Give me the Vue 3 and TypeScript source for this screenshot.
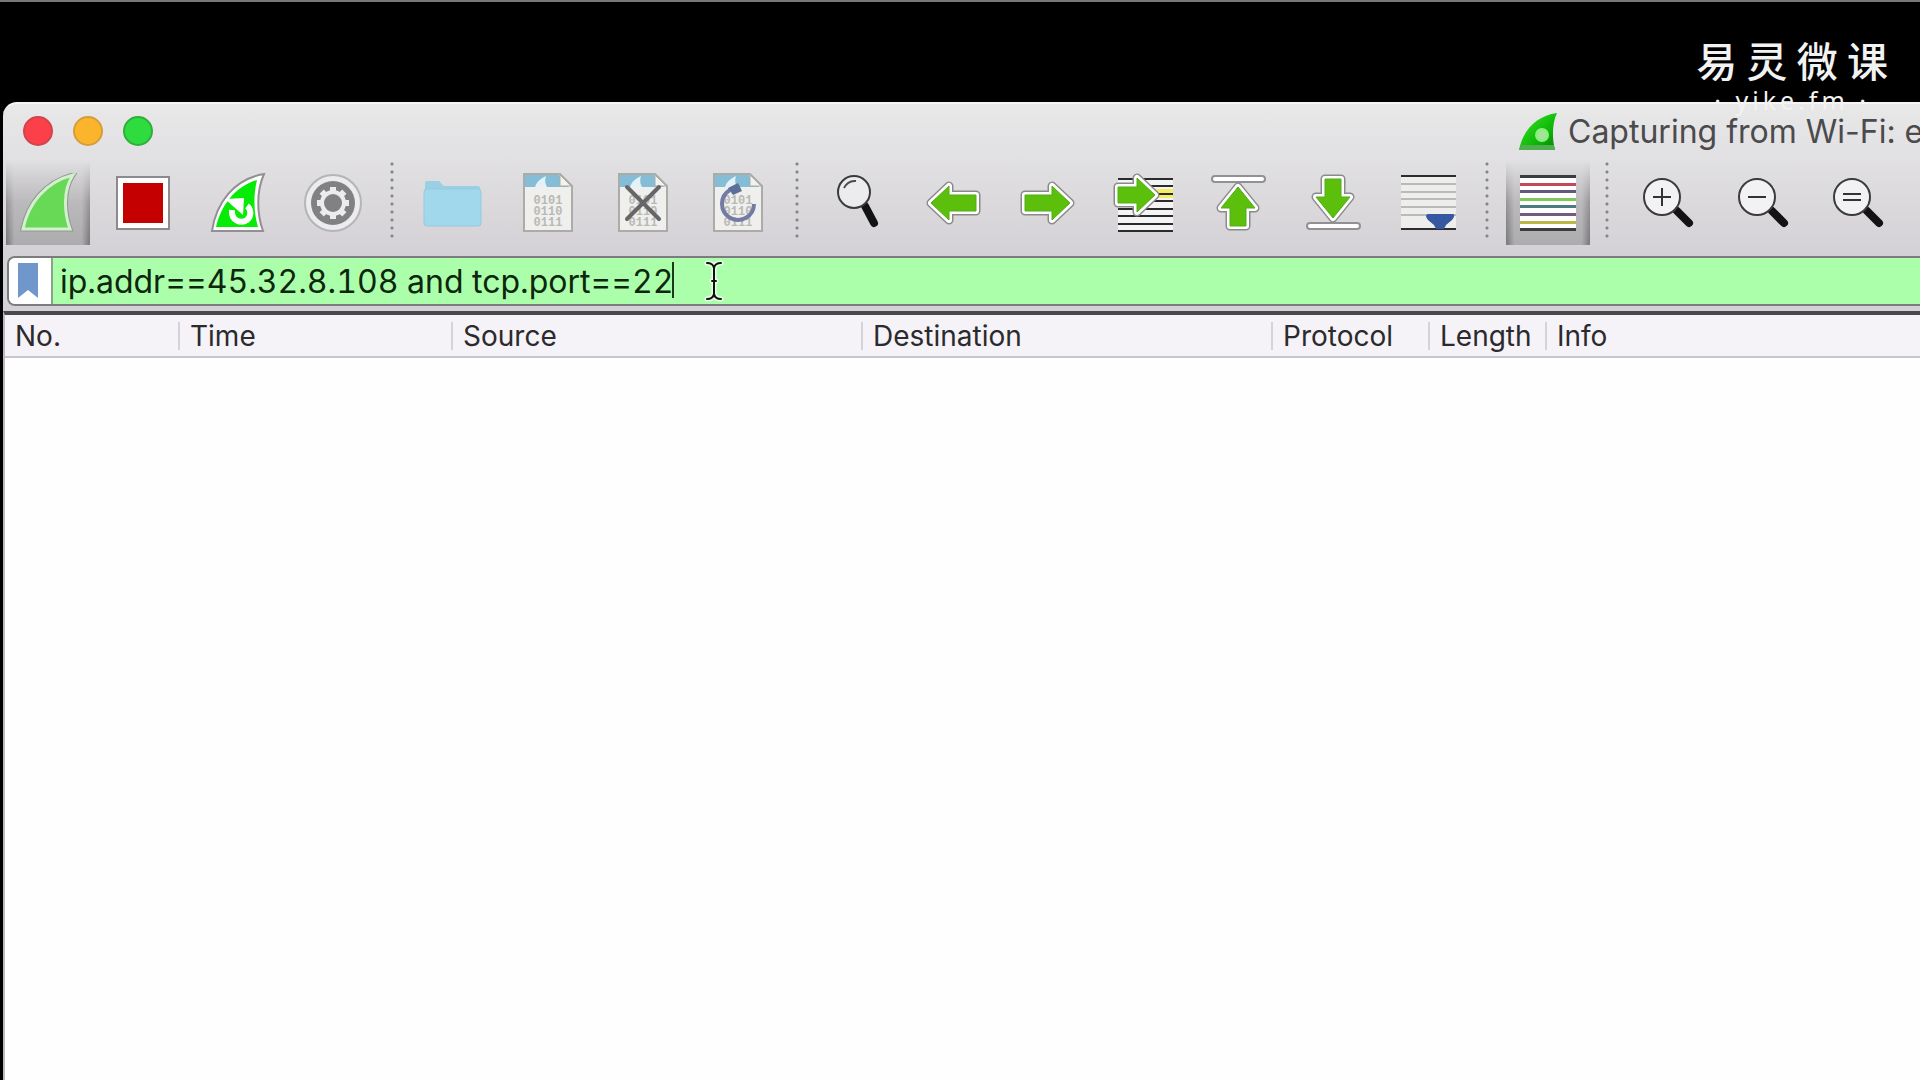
<script setup lang="ts">
import { ref } from 'vue'

type Tool = { id: string; label: string; pressed?: boolean; disabled?: boolean }

const groups: Tool[][] = [
  [
    { id: 'start', label: 'Start capturing packets', pressed: true },
    { id: 'stop', label: 'Stop capturing packets' },
    { id: 'restart', label: 'Restart current capture' },
    { id: 'options', label: 'Capture options' },
  ],
  [
    { id: 'open', label: 'Open a capture file', disabled: true },
    { id: 'save', label: 'Save this capture file', disabled: true },
    { id: 'close', label: 'Close this capture file', disabled: true },
    { id: 'reload', label: 'Reload this file', disabled: true },
  ],
  [
    { id: 'find', label: 'Find a packet' },
    { id: 'back', label: 'Go back in packet history' },
    { id: 'forward', label: 'Go forward in packet history' },
    { id: 'goto', label: 'Go to specified packet' },
    { id: 'first', label: 'Go to the first packet' },
    { id: 'last', label: 'Go to the last packet' },
    { id: 'autoscroll', label: 'Automatically scroll to the last packet' },
  ],
  [{ id: 'colorize', label: 'Colorize packet list', pressed: true }],
  [
    { id: 'zoomin', label: 'Zoom in' },
    { id: 'zoomout', label: 'Zoom out' },
    { id: 'zoomreset', label: 'Normal size' },
  ],
]

const arrows: Record<string, string> = {
  back: 'M8 30 L26 13 V22 H53 V38 H26 V47 Z',
  forward: 'M52 30 L34 13 V22 H7 V38 H34 V47 Z',
  goto: 'M42 22 L24 5 V14 H5 V30 H24 V39 Z',
  first: 'M30 14 L47 35 H38 V53 H22 V35 H13 Z',
  last: 'M30 45 L47 24 H38 V6 H22 V24 H13 Z',
}

const stripes = ['#3c3b40', '#c4485c', '#62597c', '#7fc95c', '#4d7a80', '#745a7c', '#bdb545', '#3c3b40']
const greyLines = [10, 18, 25, 33, 41]
const gotoLines = [6, 13, 21, 28, 36, 43, 51, 58]
const teeth = [0, 45, 90, 135, 180, 225, 270, 315]
const bits = [
  { y: 31, text: '0101' },
  { y: 42, text: '0110' },
  { y: 53, text: '0111' },
]

const columns = [
  { name: 'No.', cls: 'c-no' },
  { name: 'Time', cls: 'c-time' },
  { name: 'Source', cls: 'c-addr' },
  { name: 'Destination', cls: 'c-addr' },
  { name: 'Protocol', cls: 'c-proto' },
  { name: 'Length', cls: 'c-len' },
  { name: 'Info', cls: 'c-info' },
]

const filter = ref('ip.addr==45.32.8.108 and tcp.port==22')
</script>

<template>
  <div class="desktop">
    <main class="window">
      <header class="titlebar">
        <div class="lights">
          <button class="light red" aria-label="Close"></button>
          <button class="light yellow" aria-label="Minimize"></button>
          <button class="light green" aria-label="Zoom"></button>
        </div>
        <div class="title">
          <svg class="app-icon" viewBox="0 0 40 38" aria-hidden="true">
            <defs>
              <linearGradient id="fin" x1="0" y1="0" x2="1" y2="1">
                <stop offset="0" stop-color="#3bea2c" />
                <stop offset="0.6" stop-color="#0fb808" />
                <stop offset="1" stop-color="#0a7d0c" />
              </linearGradient>
            </defs>
            <path d="M1 37 C5 17 18 3 39 0 C34 10 34 26 37 37 Z" fill="url(#fin)" />
            <path d="M1 37 L3 32 H36 L37 37 Z" fill="#4fae4e" />
            <circle cx="24" cy="22" r="7" fill="#8af07c" />
            <circle cx="24" cy="22" r="4" fill="#a5e2a0" />
          </svg>
          <span>Capturing from Wi-Fi: e</span>
        </div>
      </header>

      <nav class="toolbar" aria-label="Main toolbar">
        <template v-for="(group, g) in groups" :key="g">
          <span v-if="g > 0" class="separator"></span>
          <button
            v-for="tool in group"
            :key="tool.id"
            class="tool"
            :class="{ pressed: tool.pressed }"
            :aria-label="tool.label"
            :disabled="tool.disabled"
          >
            <svg class="icon" viewBox="0 0 60 60" aria-hidden="true">
              <template v-if="tool.id === 'start'">
                <path d="M5 56 C10 31 27 9 55 2 C45 17 46 39 52 56 Z" fill="none" stroke="#8f9a8f" stroke-width="5" />
                <path d="M5 56 C10 31 27 9 55 2 C45 17 46 39 52 56 Z" fill="#67d957" stroke="#d3efcf" stroke-width="3" />
              </template>

              <template v-else-if="tool.id === 'stop'">
                <rect x="4" y="4" width="52" height="52" fill="#fff" stroke="#8c8a8c" stroke-width="2" />
                <rect x="10" y="10" width="40" height="40" fill="#c40000" />
              </template>

              <template v-else-if="tool.id === 'restart'">
                <path d="M4 58 C8 30 26 6 56 1 C48 19 49 41 55 58 Z" fill="#fff" stroke="#929092" stroke-width="2" />
                <path d="M8 54 C13 32 28 13 49 7 C45 23 46 41 50 54 Z" fill="#06ec06" />
                <path d="M24 37 C23 48 33 51 39 47 C44 43 43 36 39 33" fill="none" stroke="#fff" stroke-width="6" />
                <path d="M17 26 L36 25 L35 42 Z" fill="#fff" />
              </template>

              <template v-else-if="tool.id === 'options'">
                <circle cx="30" cy="30" r="28" fill="#ecebed" stroke="#b5b4b6" stroke-width="2" />
                <circle cx="30" cy="30" r="22" fill="#818183" />
                <circle cx="30" cy="30" r="13" fill="#ececee" />
                <rect
                  v-for="a in teeth"
                  :key="a"
                  x="27"
                  y="14"
                  width="6"
                  height="8"
                  fill="#ececee"
                  :transform="`rotate(${a} 30 30)`"
                />
                <circle cx="30" cy="30" r="9" fill="#818183" />
              </template>

              <template v-else-if="tool.id === 'open'">
                <path d="M2 10 Q2 8 4 8 H16 L21 13 H55 Q57 13 57 15 V19 H2 Z" fill="#9bcfe4" />
                <rect x="1" y="16" width="57" height="37" rx="3" fill="#a2d8ec" stroke="#94cadf" />
              </template>

              <template v-else-if="tool.id === 'save' || tool.id === 'close' || tool.id === 'reload'">
                <path d="M6 1 H42 L54 13 V58 H6 Z" fill="#efefed" stroke="#abaca8" stroke-width="2" />
                <path d="M7 2 H41 L51 14 H7 Z" fill="#85bdd6" />
                <path d="M17 14 Q19 7 28 3 Q26 9 29 14 Z" fill="#e4f1f8" />
                <path d="M42 2 L53 13 H42 Z" fill="#f3f3ee" stroke="#abaca8" />
                <text v-for="b in bits" :key="b.y" x="30" :y="b.y" class="bits">{{ b.text }}</text>
                <path
                  v-if="tool.id === 'close'"
                  d="M14 14 L46 46 M46 14 L14 46"
                  stroke="#666668"
                  stroke-width="4"
                  stroke-linecap="round"
                />
                <template v-if="tool.id === 'reload'">
                  <path d="M22 17 A16 16 0 1 0 46 31" fill="none" stroke="#737ba3" stroke-width="4" />
                  <path d="M20 15 L30 10 L34 18 L25 22 Z" fill="#5c6f99" />
                </template>
              </template>

              <template v-else-if="tool.id === 'find'">
                <path d="M37 33 L46 50" stroke="#131313" stroke-width="8" stroke-linecap="round" />
                <circle cx="26" cy="19" r="16" fill="#ececee" stroke="#3b3b3d" stroke-width="2" />
                <path d="M16 15 Q20 7 28 8" fill="none" stroke="#4c4c4e" stroke-width="2" />
              </template>

              <template v-else-if="tool.id.startsWith('zoom')">
                <path d="M39 38 L51 50" stroke="#131313" stroke-width="8" stroke-linecap="round" />
                <circle cx="24" cy="24" r="18" fill="#f2f2f4" stroke="#3b3b3d" stroke-width="2" />
                <path v-if="tool.id === 'zoomin'" d="M15 24 H33 M24 15 V33" stroke="#333" stroke-width="2" />
                <path v-if="tool.id === 'zoomout'" d="M15 24 H33" stroke="#333" stroke-width="2" />
                <path v-if="tool.id === 'zoomreset'" d="M15 21 H33 M15 27 H33" stroke="#333" stroke-width="2" />
              </template>

              <template v-else-if="tool.id === 'autoscroll'">
                <rect x="3" y="3" width="55" height="54" fill="#eeeeec" />
                <path v-for="y in greyLines" :key="y" :d="`M3 ${y + 1} H58`" stroke="#bbbab9" stroke-width="2" />
                <path d="M3 3 H58 M3 56 H58" stroke="#2d2d2f" stroke-width="2" />
                <path d="M30 41 H55 Q58 42 54 47 L48 52 L46 56 H38 L36 52 L30 47 Q26 42 30 41 Z" fill="#3558a0" />
              </template>

              <template v-else-if="tool.id === 'colorize'">
                <rect x="2" y="3" width="56" height="55" fill="#fff" />
                <rect
                  v-for="(c, i) in stripes"
                  :key="i"
                  x="2"
                  :y="2 + Math.round(i * 7.6)"
                  width="56"
                  height="3"
                  :fill="c"
                />
              </template>

              <template v-else>
                <template v-if="tool.id === 'goto'">
                  <rect x="5" y="6" width="55" height="52" fill="#f4f4f4" />
                  <rect x="38" y="16" width="22" height="9" fill="#f3ee62" />
                  <path v-for="y in gotoLines" :key="y" :d="`M5 ${y} H60`" stroke="#2b2b2d" stroke-width="2" />
                </template>
                <rect v-if="tool.id === 'first'" x="4" y="3" width="53" height="6" rx="3" fill="#fff" stroke="#919193" stroke-width="2" />
                <rect v-if="tool.id === 'last'" x="4" y="50" width="53" height="6" rx="3" fill="#fff" stroke="#919193" stroke-width="2" />
                <g stroke-linejoin="round">
                  <path :d="arrows[tool.id]" fill="none" stroke="#8a8a8c" stroke-width="9" />
                  <path :d="arrows[tool.id]" fill="#5bbf0c" stroke="#fff" stroke-width="6" />
                  <path :d="arrows[tool.id]" fill="#5bbf0c" stroke="#55ad16" stroke-width="1" />
                </g>
              </template>
            </svg>
          </button>
        </template>
      </nav>

      <form class="filterbar" @submit.prevent>
        <button class="bookmark" type="button" aria-label="Manage saved bookmarks">
          <svg viewBox="0 0 20 36" aria-hidden="true">
            <path d="M0 0 H20 V35 L10 27 L0 35 Z" fill="#6f97cb" />
          </svg>
        </button>
        <div class="field">
          <input v-model="filter" type="text" aria-label="Display filter" spellcheck="false" />
          <span class="caret"></span>
          <svg class="ibeam" viewBox="0 0 20 42" aria-hidden="true">
            <g fill="none" stroke-linecap="round">
              <path d="M3 3 Q9 3 10 8 Q11 3 17 3 M10 8 V34 M3 39 Q9 39 10 34 Q11 39 17 39 M8 21 H12" stroke="#e9ffe8" stroke-width="5" />
              <path d="M3 3 Q9 3 10 8 Q11 3 17 3 M10 8 V34 M3 39 Q9 39 10 34 Q11 39 17 39 M8 21 H12" stroke="#111" stroke-width="2" />
            </g>
          </svg>
        </div>
      </form>

      <section class="packets">
        <table>
          <thead>
            <tr>
              <th v-for="c in columns" :key="c.name" :class="c.cls" scope="col"><span>{{ c.name }}</span></th>
            </tr>
          </thead>
        </table>
      </section>
    </main>

    <aside class="watermark">
      <p class="brand">易 灵 微 课</p>
      <p class="site">· yike.fm ·</p>
    </aside>
  </div>
</template>

<style>
body {
  margin: 0;
  background: #000;
}
</style>

<style scoped>
* {
  box-sizing: border-box;
}

.desktop {
  position: relative;
  display: flex;
  flex-direction: column;
  min-height: 100vh;
  padding: 100px 0 0 3px;
  border-top: 2px solid #777;
  background: #000;
  overflow: hidden;
  font-family: Inter, 'Liberation Sans', sans-serif;
}

.window {
  flex: 1;
  display: flex;
  flex-direction: column;
  border-radius: 14px 0 0 0;
  border-top: 2px solid #f6f5f6;
  background: linear-gradient(#e9e8e9, #d3d1d5 152px);
  overflow: hidden;
}

.titlebar {
  display: flex;
  align-items: center;
  height: 54px;
}

.lights {
  display: flex;
  gap: 20px;
  padding-left: 20px;
}

.light {
  width: 30px;
  height: 30px;
  padding: 0;
  border-radius: 50%;
}

.red {
  background: #fb4049;
  border: 2px solid #d0444b;
}

.yellow {
  background: #fbb52c;
  border: 2px solid #d59d3b;
}

.green {
  background: #2fdc40;
  border: 2px solid #2fae3c;
}

.title {
  display: flex;
  align-items: center;
  gap: 10px;
  width: 402px;
  margin-left: auto;
  padding-top: 2px;
  color: #4b4a4c;
  font-size: 32px;
  line-height: 36px;
  white-space: nowrap;
}

.app-icon {
  flex: none;
  width: 40px;
  height: 38px;
}

.toolbar {
  display: flex;
  gap: 11px;
  padding: 3px 0 0 3px;
}

.tool {
  position: relative;
  flex: none;
  display: flex;
  align-items: center;
  justify-content: center;
  width: 84px;
  height: 84px;
  padding: 0;
  border: 0;
  background: none;
}

.pressed::before {
  content: '';
  position: absolute;
  inset: 0;
  background:
    linear-gradient(90deg, #777578, transparent 10%, transparent 90%, #777578),
    #acabad;
  mask-image: linear-gradient(transparent, #000000b0 50%, #000);
}

.icon {
  position: relative;
  width: 60px;
  height: 60px;
}

.bits {
  fill: #b9b9b4;
  font-family: 'Liberation Mono', monospace;
  font-size: 12px;
  font-weight: bold;
  text-anchor: middle;
}

.separator {
  flex: none;
  width: 14px;
  height: 80px;
  background: radial-gradient(circle at 6px 3px, #858487 1px, transparent 2px) 0 0 / 14px 8px repeat-y;
}

.filterbar {
  display: flex;
  height: 50px;
  margin: 11px 0 5px 4px;
  border: 2px solid #7c7b7e;
  border-right: 0;
  border-radius: 8px 0 0 8px;
  background: #abffaa;
  overflow: hidden;
}

.bookmark {
  display: flex;
  align-items: center;
  justify-content: center;
  width: 44px;
  padding: 0 4px 0 0;
  border: 0;
  border-right: 2px solid #8aa58b;
  background: #fff;
}

.bookmark svg {
  width: 20px;
  height: 36px;
}

.field {
  position: relative;
  flex: 1;
}

.field input {
  display: block;
  width: 100%;
  height: 46px;
  padding: 0 7px;
  border: 0;
  outline: 0;
  background: transparent;
  color: #0e260e;
  font-family: inherit;
  font-size: 32px;
  font-variant-numeric: tabular-nums;
}

.caret {
  position: absolute;
  top: 4px;
  left: 619px;
  width: 2px;
  height: 36px;
  background: #1b3a1b;
}

.ibeam {
  position: absolute;
  top: 2px;
  left: 651px;
  width: 20px;
  height: 42px;
}

.packets {
  flex: 1;
  border-top: 4px solid #4b484d;
  border-left: 2px solid #bdb8bf;
  background: #fffeff;
}

table {
  width: 100%;
  table-layout: fixed;
  border-collapse: collapse;
}

thead {
  background: #f5f3f7;
}

th {
  height: 42px;
  padding: 0;
  border-bottom: 2px solid #c9c6cb;
  color: #2b2a2d;
  font-size: 28px;
  font-weight: 400;
  line-height: 28px;
  text-align: left;
}

th span {
  display: block;
  padding-left: 10px;
  border-left: 2px solid #d6d3d8;
}

.c-no span {
  padding-left: 8px;
  border-left-color: transparent;
}

.c-no {
  width: 173px;
}

.c-time {
  width: 273px;
}

.c-addr {
  width: 410px;
}

.c-proto {
  width: 157px;
}

.c-len {
  width: 117px;
}

.watermark {
  position: absolute;
  top: 32px;
  right: 32px;
  color: #f2f2f2;
  text-align: center;
}

.watermark p {
  margin: 0;
  white-space: nowrap;
}

.brand {
  font-family: 'Noto Sans CJK SC', sans-serif;
  font-size: 41px;
  font-weight: 500;
  line-height: 50px;
}

.site {
  font-family: 'Noto Sans', sans-serif;
  font-size: 25px;
  line-height: 32px;
  letter-spacing: 4px;
}
</style>
